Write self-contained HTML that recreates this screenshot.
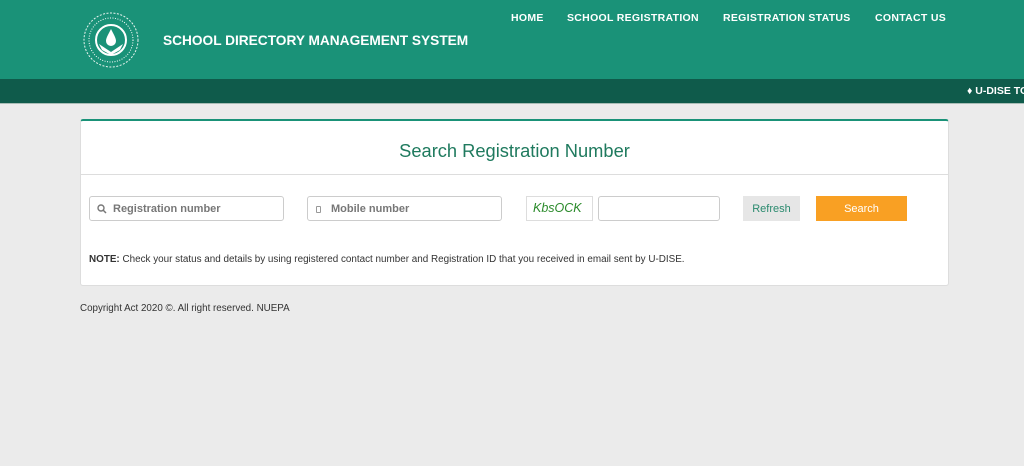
<!DOCTYPE html>
<html><head><style>
body{margin:0;width:1024px;height:466px;background:#ebebeb;font-family:"Liberation Sans",sans-serif;position:relative;overflow:hidden}
.hdr{position:absolute;left:0;top:0;width:1024px;height:79px;background:#1a9278}
.band{position:absolute;left:0;top:79px;width:1024px;height:24px;background:#0f5b4b;border-bottom:1px solid #a9bdb6}
.nav{position:absolute;top:12px;color:#fff;font-weight:bold;font-size:10.5px;letter-spacing:.3px}
.card{position:absolute;left:80px;top:119px;width:867px;height:164px;background:#fff;border:1px solid #ddd;border-top:2px solid #1a9278;border-radius:3px}
.inp{position:absolute;top:196px;height:25px;border:1px solid #ccc;border-radius:3px;background:#fff;box-sizing:border-box;font-size:11px;font-weight:bold;color:#777;line-height:24px}
</style></head><body>
<div class="hdr">
<svg style="position:absolute;left:80px;top:11px" width="62" height="58" viewBox="0 0 62 58">
<circle cx="31" cy="29" r="27" fill="none" stroke="#e8f3ef" stroke-width="1" stroke-dasharray="2 1.5"/>
<circle cx="31" cy="29" r="22" fill="none" stroke="#fff" stroke-width="1" stroke-dasharray="1 1.5"/>
<circle cx="31" cy="29" r="15" fill="none" stroke="#fff" stroke-width="2"/>
<path d="M31 18 C28 24 26 27 26 30 a5 5 0 0 0 10 0 C36 27 34 24 31 18Z" fill="#fff"/>
<path d="M19 33 l12 8 12 -8 -3 6 -9 5 -9 -5Z" fill="#fff"/>
</svg>
<div style="position:absolute;left:163px;top:33px;color:#fff;font-weight:bold;font-size:13.7px">SCHOOL DIRECTORY MANAGEMENT SYSTEM</div>
<div class="nav" style="left:511px">HOME</div>
<div class="nav" style="left:567px">SCHOOL REGISTRATION</div>
<div class="nav" style="left:723px">REGISTRATION STATUS</div>
<div class="nav" style="left:875px">CONTACT US</div>
</div>
<div class="band"><div style="position:absolute;left:967px;top:6px;color:#fff;font-weight:bold;font-size:10.5px;white-space:nowrap">♦ U-DISE TO</div></div>
<div class="card">
<div style="position:absolute;left:0;right:0;top:19px;text-align:center;color:#1f7a5e;font-size:18.3px">Search Registration Number</div>
<div style="position:absolute;left:0;right:0;top:53px;border-top:1px solid #ddd"></div>
</div>
<div class="inp" style="left:89px;width:195px;padding-left:23px"><svg style="position:absolute;left:7px;top:7px" width="10" height="10"><circle cx="4" cy="4" r="3" fill="none" stroke="#777" stroke-width="1.4"/><path d="M6 6l3 3" stroke="#777" stroke-width="1.5"/></svg>Registration number</div>
<div class="inp" style="left:307px;width:195px;padding-left:23px"><span style="position:absolute;left:8px;top:9px;width:3px;height:5px;border:1px solid #999;border-radius:1px"></span>Mobile number</div>
<div style="position:absolute;left:526px;top:196px;width:67px;height:25px;border:1px solid #ddd;box-sizing:border-box;color:#2a8a2a;font-style:italic;font-size:12.5px;line-height:22px;padding-left:6px">KbsOCK</div>
<div class="inp" style="left:598px;width:122px"></div>
<div style="position:absolute;left:743px;top:196px;width:57px;height:25px;background:#e6e6e6;color:#2a8a6e;font-size:11px;text-align:center;line-height:26px">Refresh</div>
<div style="position:absolute;left:816px;top:196px;width:91px;height:25px;background:#f9a023;color:#fff;font-size:11px;text-align:center;line-height:26px">Search</div>
<div style="position:absolute;left:89px;top:254px;font-size:9.9px;color:#333"><b>NOTE:</b> Check your status and details by using registered contact number and Registration ID that you received in email sent by U-DISE.</div>
<div style="position:absolute;left:80px;top:303px;font-size:9.8px;color:#333">Copyright Act 2020 ©. All right reserved. NUEPA</div>
</body></html>
